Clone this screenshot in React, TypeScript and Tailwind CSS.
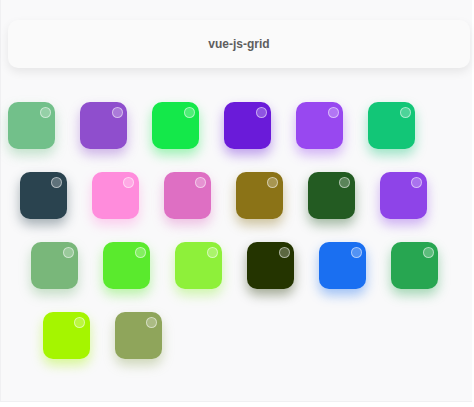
import React from 'react';

const rows: { offset: string; colors: string[] }[] = [
  { offset: 'ml-[7px]', colors: ['#72c08a', '#8f4ecd', '#14e84a', '#6a1bd9', '#9848f0', '#12c677'] },
  { offset: 'ml-[18.5px]', colors: ['#2a434f', '#ff8cdc', '#de6fc3', '#8b7317', '#235b22', '#8e44e8'] },
  { offset: 'ml-[30px]', colors: ['#79b77a', '#5aea2d', '#8ef03a', '#243400', '#1a6ff1', '#27a651'] },
  { offset: 'ml-[41.5px]', colors: ['#a5f500', '#8fa55b'] },
];

function Tile({ color }: { color: string }) {
  return (
    <div
      className="relative w-[47px] h-[47px] rounded-[10px] shrink-0"
      style={{ backgroundColor: color, boxShadow: `0 6px 12px ${color}66` }}
    >
      <div className="absolute top-[4.5px] right-[4.5px] w-[11px] h-[11px] rounded-full border-[1.5px] border-white/50 bg-white/25" />
    </div>
  );
}

export default function App() {
  return (
    <div
      className="w-[474px] h-[407px] bg-white overflow-hidden"
      style={{ fontFamily: '"Liberation Sans", Arial, sans-serif' }}
    >
      <div className="w-[472px] h-[402px] bg-[#f9f9fa] border-l border-b border-[#f0f0f2] pt-[20px]">
        <div className="ml-[7px] w-[462px] h-[48px] rounded-[10px] bg-[#fafafa] shadow-[0_4px_10px_rgba(0,0,0,0.08)] flex items-center justify-center">
          <span className="text-[12px] font-bold text-[#5e5e5e]">vue-js-grid</span>
        </div>
        <div className="mt-[34px] flex flex-col gap-[23px]">
          {rows.map((row, i) => (
            <div key={i} className={`flex gap-[25px] ${row.offset}`}>
              {row.colors.map((c, j) => (
                <Tile key={j} color={c} />
              ))}
            </div>
          ))}
        </div>
      </div>
    </div>
  );
}
